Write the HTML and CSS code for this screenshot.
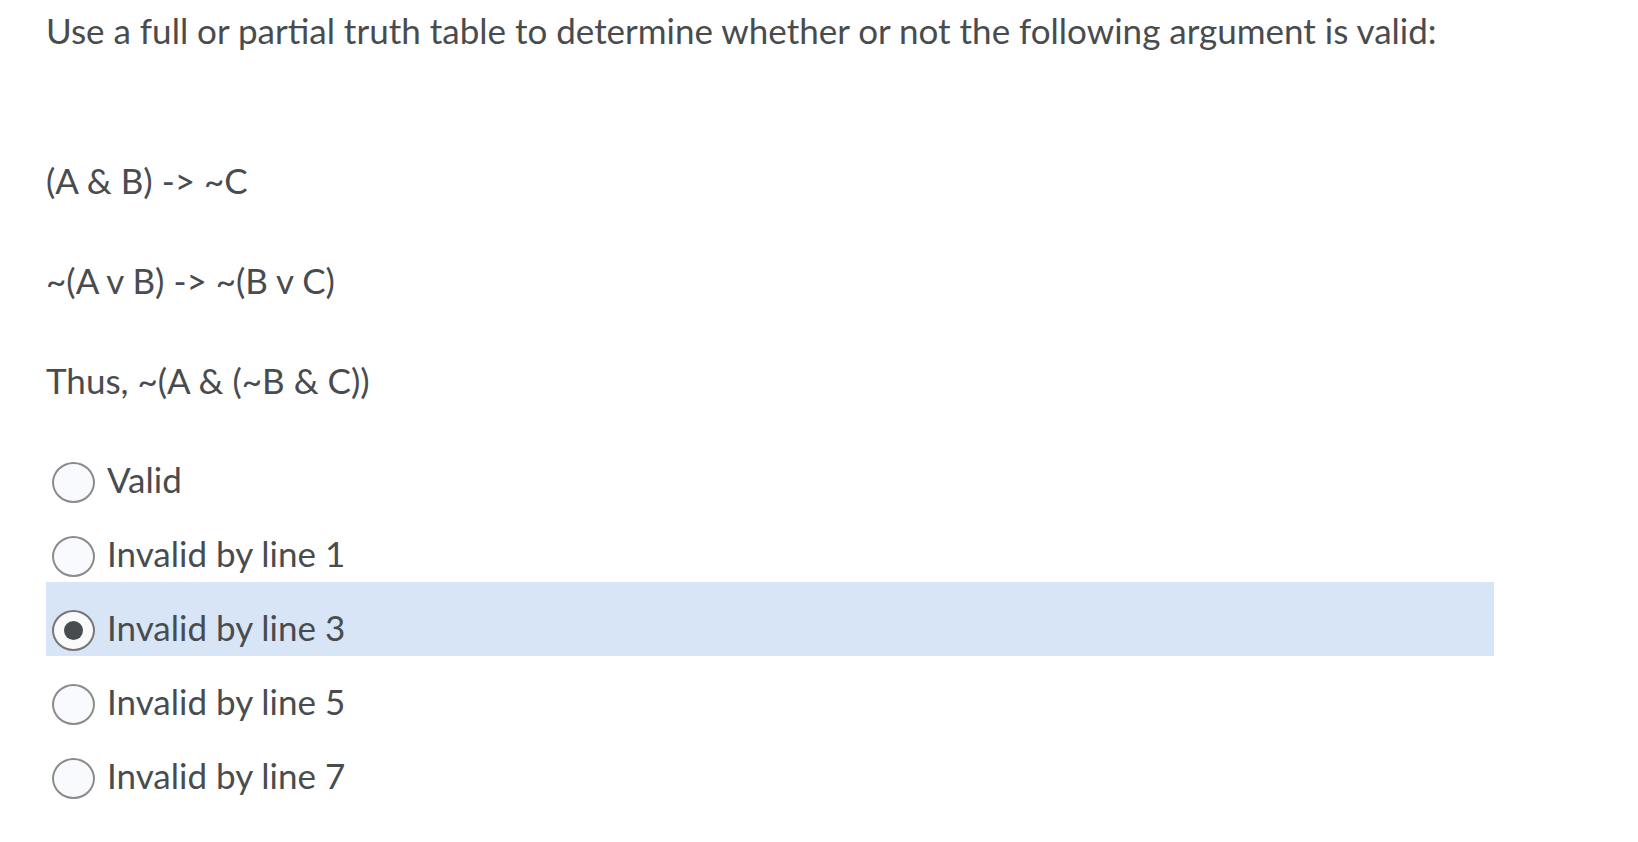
FILE: index.html
```html
<!DOCTYPE html>
<html lang="en">
<head>
<meta charset="utf-8">
<title>Truth table question</title>
<link rel="stylesheet" href="styles.css">
</head>
<body>
<div class="page">
  <p class="prompt">Use a full or partial truth table to determine whether or not the following argument is valid:</p>
  <div class="premises">
    <p class="formula">(A &amp; B) -&gt; ~C</p>
    <p class="formula">~(A v B) -&gt; ~(B v C)</p>
    <p class="formula">Thus, ~(A &amp; (~B &amp; C))</p>
  </div>
  <ul class="options">
    <li class="option"><span class="radio"></span><span class="label">Valid</span></li>
    <li class="option"><span class="radio"></span><span class="label">Invalid by line 1</span></li>
    <li class="option selected"><span class="radio checked"></span><span class="label">Invalid by line 3</span></li>
    <li class="option"><span class="radio"></span><span class="label">Invalid by line 5</span></li>
    <li class="option"><span class="radio"></span><span class="label">Invalid by line 7</span></li>
  </ul>
</div>
</body>
</html>
```

FILE: styles.css
```css
html, body {
  margin: 0;
  padding: 0;
  background: #ffffff;
}

body {
  font-family: Lato, "Noto Sans", "Liberation Sans", sans-serif;
  color: #494c4e;
}

.page {
  padding-left: 46px;
}

.prompt {
  margin: 0;
  font-size: 35px;
  line-height: 60px;
  height: 60px;
  white-space: nowrap;
}

.premises {
  margin-top: 70px;
}

.formula {
  margin: 0;
  font-size: 35px;
  line-height: 100px;
  height: 100px;
}

.options {
  list-style: none;
  margin: 4px 0 0 0;
  padding: 0;
  width: 1448px;
}

.option {
  display: flex;
  align-items: center;
  height: 58px;
  padding: 16px 0 0 6px;
  font-size: 35px;
  line-height: 58px;
}

.option.selected {
  background: #d7e5f7;
}

.radio {
  position: relative;
  flex: none;
  box-sizing: border-box;
  width: 43px;
  height: 41px;
  margin-top: 6px;
  margin-right: 12px;
  border: 2px solid #8b8b8b;
  border-radius: 50%;
  background: #f9fafe;
}

.radio.checked {
  border-color: #767676;
  background: #fafafa;
}

.radio.checked::after {
  content: "";
  position: absolute;
  left: 50%;
  top: 50%;
  width: 19px;
  height: 19px;
  margin: -9.5px 0 0 -9.5px;
  border-radius: 50%;
  background: #494c4e;
}
```
